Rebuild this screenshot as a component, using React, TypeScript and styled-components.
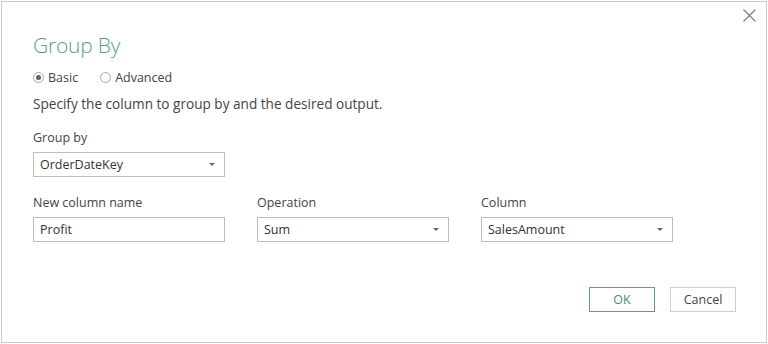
import React from "react";
import styled, { createGlobalStyle } from "styled-components";

const Global = createGlobalStyle`
  html, body { margin: 0; padding: 0; background: #ffffff; }
  body { font-family: "Open Sans", "Noto Sans", sans-serif; color: #444; }
  * { box-sizing: border-box; }
`;

const Frame = styled.div`
  position: relative;
  margin: 1px 0 0 1px;
  width: 766px;
  height: 342px;
  border: 1px solid #c9c9c9;
  background: #fff;
  padding: 28px 30px 0 31px;
  display: flex;
  flex-direction: column;
`;

const Close = styled.button`
  position: absolute;
  top: 5px;
  right: 8px;
  width: 17px;
  height: 17px;
  padding: 0;
  border: none;
  background: transparent;
  display: flex;
  align-items: center;
  justify-content: center;
`;

const Title = styled.h1`
  margin: 0;
  font-weight: 300;
  font-size: 21px;
  line-height: 30px;
  height: 30px;
  color: #5e9d7e;
  letter-spacing: -0.2px;
`;

const RadioRow = styled.div`
  margin-top: 7px;
  height: 20px;
  display: flex;
  align-items: center;
  gap: 22px;
`;

const RadioOption = styled.label`
  display: flex;
  align-items: center;
  gap: 4px;
  font-size: 12.5px;
  color: #444;
`;

const RadioCircle = styled.span<{ $checked?: boolean }>`
  width: 11px;
  height: 11px;
  border-radius: 50%;
  border: 1px solid #a8a8a8;
  display: flex;
  align-items: center;
  justify-content: center;
  &::after {
    content: "";
    width: 5px;
    height: 5px;
    border-radius: 50%;
    background: ${(p) => (p.$checked ? "#606060" : "transparent")};
  }
`;

const Description = styled.p`
  margin: 7px 0 0;
  height: 20px;
  line-height: 20px;
  font-size: 13.6px;
  color: #444;
`;

const Label = styled.div`
  height: 24px;
  line-height: 24px;
  font-size: 12.5px;
  color: #444;
`;

const Field = styled.div<{ $top: number }>`
  margin-top: ${(p) => p.$top}px;
  display: flex;
  flex-direction: column;
  gap: 2px;
  width: 192px;
`;

const FieldRow = styled.div`
  display: flex;
  gap: 32px;
`;

const Box = styled.div`
  height: 25px;
  border: 1px solid #bdbdbd;
  background: #fff;
  display: flex;
  align-items: center;
  justify-content: space-between;
  padding: 0 9px 0 6px;
  font-size: 12.5px;
  color: #333;
`;

const Arrow = styled.span`
  width: 0;
  height: 0;
  border-left: 3px solid transparent;
  border-right: 3px solid transparent;
  border-top: 3px solid #666;
`;

const Footer = styled.div`
  margin-top: 45px;
  display: flex;
  justify-content: flex-end;
  gap: 15px;
`;

const Button = styled.button<{ $primary?: boolean }>`
  width: 66px;
  height: 25px;
  background: #fff;
  border: 1px solid ${(p) => (p.$primary ? "#5e9d7e" : "#cfcfcf")};
  color: ${(p) => (p.$primary ? "#4f8a6c" : "#444")};
  font-family: "Open Sans", "Noto Sans", sans-serif;
  font-size: 12.5px;
  padding: 0;
`;

function Select({ value }: { value: string }) {
  return (
    <Box>
      <span>{value}</span>
      <Arrow />
    </Box>
  );
}

export default function App() {
  return (
    <>
      <Global />
      <Frame>
        <Close aria-label="Close">
          <svg width="13" height="13" viewBox="0 0 13 13">
            <path d="M0.5 0.5 L12.5 12.5 M12.5 0.5 L0.5 12.5" stroke="#7a7a7a" strokeWidth="1.1" fill="none" />
          </svg>
        </Close>
        <Title>Group By</Title>
        <RadioRow>
          <RadioOption>
            <RadioCircle $checked />
            Basic
          </RadioOption>
          <RadioOption>
            <RadioCircle />
            Advanced
          </RadioOption>
        </RadioRow>
        <Description>Specify the column to group by and the desired output.</Description>
        <Field $top={12}>
          <Label>Group by</Label>
          <Select value="OrderDateKey" />
        </Field>
        <FieldRow>
          <Field $top={14}>
            <Label>New column name</Label>
            <Box>Profit</Box>
          </Field>
          <Field $top={14}>
            <Label>Operation</Label>
            <Select value="Sum" />
          </Field>
          <Field $top={14}>
            <Label>Column</Label>
            <Select value="SalesAmount" />
          </Field>
        </FieldRow>
        <Footer>
          <Button $primary>OK</Button>
          <Button>Cancel</Button>
        </Footer>
      </Frame>
    </>
  );
}
